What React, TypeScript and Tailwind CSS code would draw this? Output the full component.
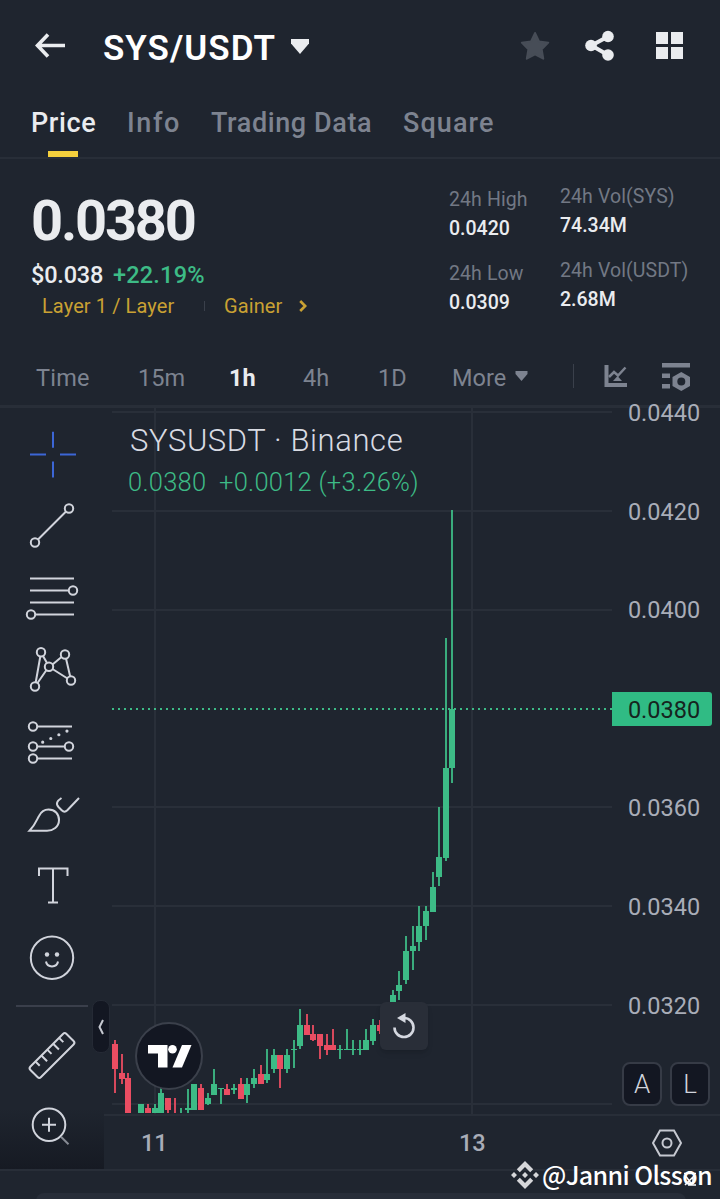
import React from 'react';

type Candle = {
  x: number;
  high: number;
  low: number;
  top: number;
  bottom: number;
  up: boolean;
};

const UP = '#3dbb86';
const DOWN = '#ea4d62';

// x, high, low, body top, body bottom (chart pixels), 1 = up / 0 = down
const rawCandles = [
  [3, 632, 685, 636, 661, 0],
  [10, 646, 676, 665, 671, 0],
  [16, 665, 705, 670, 705, 0],
  [29, 696, 705, 696, 705, 1],
  [36, 696, 705, 700, 705, 0],
  [43, 696, 705, 700, 705, 1],
  [49, 679, 705, 685, 705, 1],
  [56, 690, 705, 690, 702, 0],
  [63, 690, 705, 705, 705, 0],
  [69, 700, 705, 705, 705, 1],
  [76, 681, 705, 700, 702, 1],
  [82, 676, 702, 676, 702, 1],
  [89, 676, 702, 680, 702, 0],
  [96, 685, 697, 690, 696, 1],
  [102, 661, 687, 676, 687, 1],
  [109, 680, 696, 680, 681, 1],
  [115, 676, 687, 681, 687, 0],
  [122, 676, 686, 680, 682, 1],
  [129, 670, 691, 676, 691, 0],
  [135, 670, 695, 676, 687, 1],
  [142, 661, 680, 670, 676, 1],
  [149, 657, 676, 666, 676, 0],
  [155, 641, 675, 666, 672, 1],
  [162, 641, 665, 647, 661, 1],
  [168, 647, 680, 647, 661, 0],
  [175, 641, 665, 647, 661, 1],
  [182, 632, 660, 641, 642, 1],
  [188, 601, 641, 617, 638, 1],
  [195, 606, 627, 617, 627, 0],
  [201, 617, 633, 626, 632, 0],
  [208, 626, 651, 626, 638, 0],
  [215, 626, 647, 637, 642, 0],
  [221, 621, 642, 637, 642, 0],
  [228, 637, 651, 641, 642, 1],
  [235, 621, 642, 641, 642, 1],
  [241, 632, 647, 641, 642, 1],
  [248, 632, 647, 641, 642, 1],
  [254, 621, 642, 632, 642, 1],
  [261, 611, 637, 617, 633, 1],
  [268, 612, 626, 617, 623, 0],
  [281, 582, 594, 587, 594, 1],
  [287, 563, 592, 577, 583, 1],
  [294, 528, 576, 543, 572, 1],
  [301, 518, 562, 538, 543, 1],
  [307, 498, 543, 518, 534, 1],
  [314, 498, 532, 503, 518, 1],
  [321, 464, 504, 479, 504, 1],
  [327, 399, 478, 449, 469, 1],
  [334, 230, 453, 360, 450, 1],
  [340, 102, 375, 301, 360, 1],
];

const candles: Candle[] = rawCandles.map(([x, high, low, top, bottom, up]) => ({
  x,
  high,
  low,
  top,
  bottom,
  up: up === 1,
}));

const gridRows = [4, 103, 202, 399, 498, 597, 696];
const axisPrices = ['0.0440', '0.0420', '0.0400', '0.0380', '0.0360', '0.0340', '0.0320'];

const Caret = ({ className }: { className: string }) => (
  <svg className={className} viewBox="0 0 18 15" fill="currentColor">
    <path d="M0 0h18v4.5L9 15 0 4.5z" />
  </svg>
);

const ToolIcon = ({ color = '#d1d4dc', children }: { color?: string; children: React.ReactNode }) => (
  <div className="ml-6 h-[72px] w-14 shrink-0 py-2">
    <svg className="h-14 w-14" viewBox="0 0 56 56" fill="none" stroke={color} strokeWidth="2">
      {children}
    </svg>
  </div>
);

const Header = () => (
  <header className="flex h-[92px] items-center pl-[34px] text-[#eaecef]">
    <svg className="h-7 w-8" viewBox="0 0 32 28" fill="none" stroke="currentColor" strokeWidth="3.6">
      <path d="M31 13.5H4M14 2.5L3.5 13.5 14 24.5" />
    </svg>
    <h1 className="ml-[37px] w-[188px] whitespace-nowrap pt-[5px] text-[35px] font-semibold leading-10 tracking-[1px] text-white">
      SYS/USDT
    </h1>
    <Caret className="h-[15px] w-[18px]" />
    <svg className="ml-[210px] h-8 w-8 text-[#474d57]" viewBox="0 0 32 32" fill="currentColor">
      <path
        d="M16 2l4.3 9 9.8 1.4-7 7 1.7 10.1L16 24.8l-8.8 4.7 1.7-10.1-7-7L11.7 11z"
        stroke="currentColor"
        strokeWidth="2"
        strokeLinejoin="round"
        transform="translate(1 1) scale(.94)"
      />
    </svg>
    <svg className="ml-[33px] h-8 w-8" viewBox="0 0 32 32" fill="currentColor">
      <path d="M7.5 15.5L24 6.5M7.5 15.5L24 25" stroke="currentColor" strokeWidth="4" />
      <circle cx="7" cy="15.5" r="5.8" />
      <circle cx="24" cy="6.5" r="5.8" />
      <circle cx="24" cy="25" r="5.8" />
    </svg>
    <div className="mb-0.5 ml-[40px] grid h-[27px] w-[27px] grid-cols-2 gap-[3px]">
      <span className="bg-current" />
      <span className="bg-current" />
      <span className="bg-current" />
      <span className="bg-current" />
    </div>
  </header>
);

const Tabs = () => (
  <nav className="flex h-[67px] border-b-2 border-[#282e38] pl-[31px] pt-[15px] text-[27px] font-medium leading-8 text-[#7d8390]">
    <div className="flex w-24 flex-col">
      <span className="tracking-[0.6px] text-[#eaecef]">Price</span>
      <span className="ml-[17px] mt-[12px] h-1.5 w-[30px] shrink-0 bg-[#f5d03d]" />
    </div>
    <span className="w-[84px] tracking-[1.6px]">Info</span>
    <span className="w-48 whitespace-nowrap tracking-[0.6px]">Trading Data</span>
    <span className="tracking-[1.1px]">Square</span>
  </nav>
);

const Stat = ({ label, value }: { label: string; value: string }) => (
  <div className="h-[74px] whitespace-nowrap">
    <p className="text-[19.5px] leading-[29px] tracking-[0.1px] text-[#727884]">{label}</p>
    <p className="text-[19.5px] font-medium leading-[29px] text-[#eaecef]">{value}</p>
  </div>
);

const Summary = () => (
  <section className="flex h-[181px]">
    <div className="w-[449px] pl-[31px] pt-7">
      <div className="text-[56px] font-bold leading-[68px] tracking-[-2.2px] text-[#eaecef]">0.0380</div>
      <div className="mt-1 flex text-[23.5px] font-medium leading-8">
        <span className="w-[82px] tracking-[-0.2px] text-[#eaecef]">$0.038</span>
        <span className="tracking-[0.2px] text-[#3dbb86]">+22.19%</span>
      </div>
      <div className="-mt-px flex items-center pl-[11px] text-[20px] leading-8 tracking-[0.1px] text-[#c9a133]">
        <span className="w-[162px] whitespace-nowrap">Layer 1 / Layer</span>
        <span className="h-2.5 w-px bg-[#3a404b]" />
        <span className="ml-[19px] w-[75px]">Gainer</span>
        <svg className="h-3 w-2" viewBox="0 0 8 12" fill="none" stroke="currentColor" strokeWidth="2.6">
          <path d="M1.2 1l5 5-5 5" />
        </svg>
      </div>
    </div>
    <div className="w-[111px] pt-[26px]">
      <Stat label="24h High" value="0.0420" />
      <Stat label="24h Low" value="0.0309" />
    </div>
    <div className="pt-[23px]">
      <Stat label="24h Vol(SYS)" value="74.34M" />
      <Stat label="24h Vol(USDT)" value="2.68M" />
    </div>
  </section>
);

const Intervals = () => (
  <nav className="flex h-[68px] items-center border-b-[3px] border-[#282e38] pl-9 pt-[11px] text-[23.5px] leading-8 text-[#7d8390]">
    <span className="w-[102px] tracking-[0.2px]">Time</span>
    <span className="w-[91px]">15m</span>
    <span className="w-[74px] font-bold text-[#eaecef]">1h</span>
    <span className="w-[75px]">4h</span>
    <span className="w-[74px]">1D</span>
    <span className="w-[63px]">More</span>
    <Caret className="mb-1 h-2.5 w-[13px]" />
    <span className="mb-1 ml-[45px] h-6 w-px bg-[#3a404b]" />
    <svg className="mb-1 ml-[30px] h-6 w-6" viewBox="0 0 24 24" fill="none" stroke="currentColor">
      <path d="M2.5 1v20H23" strokeWidth="4" />
      <path d="M5 13l5-5 4 3.500 7.500-8" strokeWidth="2.500" />
      <path d="M9 17l4.500-5 4.500 5z" fill="currentColor" stroke="none" />
    </svg>
    <svg className="mb-0.5 ml-[34px] h-7 w-7" viewBox="0 0 28 28" fill="currentColor">
      <path d="M0 0h28v4.500H0zM0 10.500h8V15H0zM0 21h8v4.500H0z" />
      <path
        fillRule="evenodd"
        d="M19.300 9l8.700 5v9l-8.700 5-8.800-5v-9zM19.300 14.500a4 4 0 1 0 0 8 4 4 0 0 0 0-8z"
      />
    </svg>
  </nav>
);

const Toolbar = () => (
  <aside className="flex w-[104px] flex-col bg-linear-to-b from-transparent from-92% to-[#161a23] pt-[10px]">
    {/* Crosshair */}
    <ToolIcon color="#3c66d6">
      <path d="M29 5.700v16M29 35.500v16M6 28.500h16M36 28.500h16" />
    </ToolIcon>
    {/* Trend line */}
    <ToolIcon>
      <path d="M14 41.500l28-28" />
      <circle cx="45" cy="10.500" r="4.200" />
      <circle cx="11" cy="44.500" r="4.200" />
    </ToolIcon>
    {/* Fib retracement */}
    <ToolIcon>
      <path d="M6 8.500h44M6 20.500h39M6 32.500h44M11 44.500h39" />
      <circle cx="49" cy="20.500" r="4.200" />
      <circle cx="7" cy="44.500" r="4.200" />
    </ToolIcon>
    {/* XABCD pattern */}
    <ToolIcon>
      <path d="M11.700 40.500l4.600-26M19 14l4 7M13.500 41l9-13M28.500 22.500l9-7.500M42 16.500l4.200 18M28.500 27l15 9.500" />
      <circle cx="17" cy="10.300" r="4.200" />
      <circle cx="41" cy="12.500" r="4.200" />
      <circle cx="25" cy="24.700" r="4.200" />
      <circle cx="47" cy="38.500" r="4.200" />
      <circle cx="11" cy="44.500" r="4.200" />
    </ToolIcon>
    {/* Forecast */}
    <ToolIcon>
      <path d="M13 12.500h35M13 32.500h28M13 44.500h35" />
      <circle cx="9" cy="12.500" r="4.200" />
      <circle cx="9" cy="32.500" r="4.200" />
      <circle cx="45" cy="32.500" r="4.200" />
      <circle cx="9" cy="44.500" r="4.200" />
      <path d="M18.700 28.200l24.400-11.200" strokeWidth="3.200" strokeLinecap="round" strokeDasharray="0 8.900" />
    </ToolIcon>
    {/* Brush */}
    <ToolIcon>
      <path d="M5.500 44.700C12 38 13 33 15 30c2-4 5-6.500 9.500-6.500C31 23.500 35 28 35 34c0 7-6 10.700-12 10.700z" />
      <path d="M37.500 12C33 15 31.500 17.500 34.500 21l3.200 3.300q2.800 2.800 5.600 0L55 12" />
    </ToolIcon>
    {/* Text */}
    <ToolIcon>
      <path d="M15 18v-7.500h28.500V18M29 10.500v34M24 44.500h10" />
    </ToolIcon>
    {/* Emoji */}
    <ToolIcon>
      <circle cx="28" cy="27.700" r="21.200" />
      <path d="M22 31.500c1 6.500 11 6.500 12 0" />
      <g fill="#d1d4dc" stroke="none">
        <circle cx="23" cy="24.500" r="2.200" />
        <circle cx="33" cy="24.500" r="2.200" />
      </g>
    </ToolIcon>
    <div className="ml-4 mt-[11px] h-0.5 w-[72px] shrink-0 bg-[#3a3f4b]" />
    <div className="mt-3" />
    {/* Ruler */}
    <ToolIcon>
      <rect x="2.500" y="21" width="51" height="15" rx="2.500" transform="rotate(-45 28 28.500)" />
      <path d="M11.700 34.700l4 4M17.600 28.800l5.500 5.500M23.500 22.900l4 4M29.400 17l5.500 5.500M35.300 11.100l4 4" />
    </ToolIcon>
    {/* Zoom in */}
    <ToolIcon>
      <g transform="translate(0 -1)">
        <circle cx="25" cy="26.700" r="16.300" />
        <path d="M18 26.700h14M25 19.700v14" />
        <path d="M37 38.700l7.500 7.500" stroke="#878b94" />
      </g>
    </ToolIcon>
  </aside>
);

const Chart = () => (
  <svg className="h-[706px] w-[500px]" viewBox="0 0 500 706">
    <g stroke="#292f39" strokeWidth="2">
      {gridRows.map((y) => (
        <line key={y} x1="0" x2="500" y1={y} y2={y} />
      ))}
      <line x1="43" x2="43" y1="0" y2="706" />
      <line x1="360" x2="360" y1="0" y2="706" />
    </g>
    <line x1="0" x2="500" y1="301" y2="301" stroke={UP} strokeWidth="2" strokeDasharray="2 4" />
    {candles.map((c) => (
      <g key={c.x} fill={c.up ? UP : DOWN}>
        <rect x={c.x - 1} y={c.high} width="2" height={c.low - c.high} opacity="0.9" />
        <rect x={c.x - 3} y={c.top} width="6" height={c.bottom - c.top} />
      </g>
    ))}
  </svg>
);

const ChartPanel = () => (
  <div className="relative flex h-[763px] border-b-2 border-[#282e38]">
    <Toolbar />
    <div className="ml-2 flex flex-1 flex-col">
      <div className="flex h-[706px]">
        <Chart />
        <div className="-mt-[45px] flex w-[100px] flex-col text-center text-[23.5px] text-[#a9adb8]">
          {axisPrices.map((p) => (
            <div key={p} className="flex h-[98.800px] shrink-0 items-center justify-center">
              {p === '0.0380' ? (
                <span className="h-[34px] w-full rounded-r-[3px] bg-[#30bb84] pl-1 leading-[36px] text-[#16241f]">{p}</span>
              ) : (
                <span className="pl-1 pt-0.5">{p}</span>
              )}
            </div>
          ))}
        </div>
      </div>
      <div className="-ml-2 flex h-[55px] items-center border-t-2 border-[#282e38] text-[23.5px] font-medium text-[#a9adb8]">
        <span className="ml-[37px] w-[318px] pt-0.5">11</span>
        <span className="w-[193px] pt-0.5">13</span>
        <svg className="h-7 w-[30px]" viewBox="0 0 30 28" fill="none" stroke="#c6c9d1" strokeWidth="2">
          <path d="M8 1.500h14L29 14l-7 12.500H8L1 14z" />
          <circle cx="15" cy="14" r="4.500" />
        </svg>
      </div>
    </div>

    {/* Chart overlays */}
    <div className="absolute left-[130px] top-[15px] whitespace-nowrap font-light">
      <p className="text-[31px] leading-9 tracking-[0.600px] text-[#d8dbe3]">SYSUSDT · Binance</p>
      <p className="-ml-0.5 mt-[7px] flex text-[25.500px] leading-8 tracking-[0.250px] text-[#3dbb86]">
        <span className="w-[91px]">0.0380</span>
        <span>+0.0012 (+3.26%)</span>
      </p>
    </div>
    <div className="absolute left-[92px] top-[592px] flex h-[53px] w-[18px] items-center justify-center rounded-lg border border-[#252a35] bg-[#131722]">
      <svg className="h-4 w-1.5" viewBox="0 0 6 16" fill="none" stroke="#c6c9d1" strokeWidth="2">
        <path d="M5 1L1.500 8 5 15" />
      </svg>
    </div>
    <div className="absolute left-[135px] top-[614px] flex h-[68px] w-[68px] items-center justify-center rounded-full border-2 border-[#3b404b] bg-[#131722] pl-0.5">
      <svg className="h-[23px] w-11" viewBox="0 0 44 23" fill="#fff">
        <path d="M0 0h19.500v22.500h-9.500V8.500H0z" />
        <circle cx="24.500" cy="4.300" r="4.300" />
        <path d="M34 0h9.500L34 22.500h-9.500z" />
      </svg>
    </div>
    <div className="absolute left-[380px] top-[594px] flex h-[48px] w-12 items-center justify-center rounded-md bg-[#292e38] shadow-md">
      <svg className="h-[26px] w-6" viewBox="0 0 24 26" fill="none" stroke="#d5d8e0" strokeWidth="2.600">
        <path d="M2.500 14.500a9.500 9.500 0 1 0 9.500-9.500" />
        <path d="M13.500 0v10L5 5z" fill="#d5d8e0" stroke="none" />
      </svg>
    </div>
    <div className="absolute right-[10px] top-[654px] flex gap-2 text-[26px] font-light leading-none text-[#d1d4dc]">
      <span className="flex h-[44px] w-10 items-center justify-center rounded-lg border-2 border-[#363b46] bg-[#131722]">A</span>
      <span className="flex h-[44px] w-10 items-center justify-center rounded-lg border-2 border-[#363b46] bg-[#131722]">L</span>
    </div>
  </div>
);

const Watermark = () => (
  <div className="absolute left-[511px] top-[1158px] flex h-[34px] items-center whitespace-nowrap font-['Noto_Sans_CJK_SC','Noto_Sans',sans-serif] text-[25px] font-medium tracking-[-0.600px] text-white">
    <svg className="h-7 w-7" viewBox="0 0 28 28" fill="#d6d7da">
      <path d="M14 0l8.200 8.200-3 3L14 6l-5.200 5.200-3-3zM14 28l8.200-8.200-3-3L14 22l-5.200-5.200-3 3z" />
      <path d="M3 11l3 3-3 3-3-3zM25 11l3 3-3 3-3-3zM14 11l3 3-3 3-3-3z" />
    </svg>
    <span className="ml-[3px]">@Janni Olsson</span>
    <svg className="absolute left-[172px] top-[14px] h-3.5 w-3.5" viewBox="0 0 14 14" fill="none" stroke="#fff" strokeWidth="1.500">
      <path d="M1 1.500h12M3 4.500l6 8M12 3L2 13M5 13h8M10 5v7" />
    </svg>
  </div>
);

const App = () => {
  return (
    <div className="relative h-[1199px] w-[720px] overflow-hidden bg-[#1f252f] font-['Roboto','Liberation_Sans',sans-serif]">
      <Header />
      <Tabs />
      <Summary />
      <Intervals />
      <ChartPanel />
      <div className="ml-9 mt-[22px] h-5 w-[650px] rounded-t-lg bg-[#272d38]" />
      <Watermark />
    </div>
  );
};

export default App;
